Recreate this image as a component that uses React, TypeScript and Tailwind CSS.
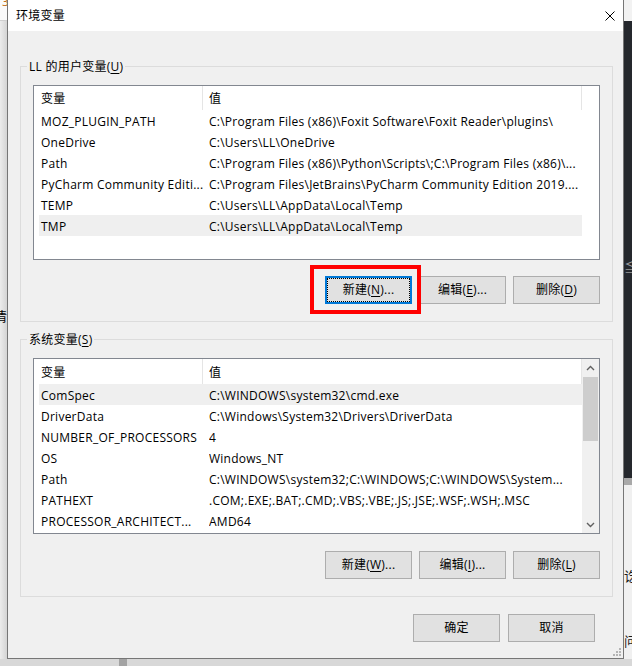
import React from "react";

type Row = { name: string; value: string; selected?: boolean };

const userVars: Row[] = [
  { name: "MOZ_PLUGIN_PATH", value: "C:\\Program Files (x86)\\Foxit Software\\Foxit Reader\\plugins\\" },
  { name: "OneDrive", value: "C:\\Users\\LL\\OneDrive" },
  { name: "Path", value: "C:\\Program Files (x86)\\Python\\Scripts\\;C:\\Program Files (x86)\\..." },
  { name: "PyCharm Community Editi...", value: "C:\\Program Files\\JetBrains\\PyCharm Community Edition 2019...." },
  { name: "TEMP", value: "C:\\Users\\LL\\AppData\\Local\\Temp" },
  { name: "TMP", value: "C:\\Users\\LL\\AppData\\Local\\Temp", selected: true },
];

const systemVars: Row[] = [
  { name: "ComSpec", value: "C:\\WINDOWS\\system32\\cmd.exe", selected: true },
  { name: "DriverData", value: "C:\\Windows\\System32\\Drivers\\DriverData" },
  { name: "NUMBER_OF_PROCESSORS", value: "4" },
  { name: "OS", value: "Windows_NT" },
  { name: "Path", value: "C:\\WINDOWS\\system32;C:\\WINDOWS;C:\\WINDOWS\\System..." },
  { name: "PATHEXT", value: ".COM;.EXE;.BAT;.CMD;.VBS;.VBE;.JS;.JSE;.WSF;.WSH;.MSC" },
  { name: "PROCESSOR_ARCHITECT...", value: "AMD64" },
];

function Key({ k }: { k: string }) {
  return <span className="underline underline-offset-[2px]">{k}</span>;
}

function Chevron({ up }: { up?: boolean }) {
  return (
    <svg width="9" height="6" viewBox="0 0 9 6">
      <polyline
        points={up ? "1,5 4.5,1.5 8,5" : "1,1 4.5,4.5 8,1"}
        fill="none"
        stroke="#606060"
        strokeWidth="1.4"
      />
    </svg>
  );
}

function Scrollbar() {
  return (
    <div className="w-[17px] bg-[#f0f0f0] flex flex-col">
      <div className="h-[17px] flex items-center justify-center">
        <Chevron up />
      </div>
      <div className="flex-1 px-[1px] pt-[1px]">
        <div className="h-[64px] bg-[#cdcdcd]" />
      </div>
      <div className="h-[17px] flex items-center justify-center">
        <Chevron />
      </div>
    </div>
  );
}

function VarList({
  rows,
  scroll,
  height,
  header,
}: {
  rows: Row[];
  scroll?: boolean;
  height: string;
  header: string;
}) {
  return (
    <div className={`${height} border border-[#828790] bg-white flex`}>
      <div className="flex-1 flex flex-col min-w-0">
        <div className={`${header} flex shrink-0`}>
          <div className="w-[169px] border-r border-[#e5e5e5] pl-[7px] pt-[2px] flex items-center">变量</div>
          <div className="flex-1 border-r border-[#e5e5e5] pl-[6px] pt-[2px] flex items-center">值</div>
        </div>
        {rows.map((r) => (
          <div
            key={r.name}
            className={`h-[21px] ml-[5px] pt-[2px] flex items-center whitespace-nowrap ${r.selected ? "bg-[#efefef]" : ""}`}
          >
            <div className="w-[170px] pl-[2px] overflow-hidden">{r.name}</div>
            <div className="flex-1 overflow-hidden">{r.value}</div>
          </div>
        ))}
      </div>
      {scroll ? <Scrollbar /> : <div className="w-[17px]" />}
    </div>
  );
}

function Btn({ children }: { children: React.ReactNode }) {
  return (
    <div className="w-[87px] h-[28px] flex items-center justify-center bg-[#e1e1e1] border border-[#adadad]">
      {children}
    </div>
  );
}

function FocusBtn({ children }: { children: React.ReactNode }) {
  return (
    <div className="relative">
      <div className="w-[87px] h-[28px] flex bg-[#e1e1e1] border-2 border-[#0078d7]">
        <div className="flex-1 flex items-center justify-center border border-dotted border-black">
          {children}
        </div>
      </div>
      {/* red callout frame around the New button */}
      <div className="absolute -left-[15px] -top-[11px] -right-[9px] -bottom-[10px] border-[4px] border-[#ff0000] z-10 pointer-events-none" />
    </div>
  );
}

function Group({ label, children }: { label: React.ReactNode; children: React.ReactNode }) {
  return (
    <div className="relative ml-[12px] mr-[10px] border border-[#dcdcdc] px-[12px] pt-[18px] pb-[17px]">
      <div className="absolute left-[6px] -top-[9px] px-[2px] h-[17px] leading-[17px] bg-[#f0f0f0]">{label}</div>
      {children}
    </div>
  );
}

function ResizeGrip() {
  const dots = [
    [6, 0],
    [3, 3],
    [6, 3],
    [0, 6],
    [3, 6],
    [6, 6],
  ];
  return (
    <svg className="absolute right-[2px] bottom-[2px]" width="8" height="8" viewBox="0 0 8 8">
      {dots.map(([x, y]) => (
        <rect key={`${x}-${y}`} x={x} y={y} width="2" height="2" fill="#b4b4b4" />
      ))}
    </svg>
  );
}

export default function App() {
  return (
    <div className="w-[632px] h-[666px] flex flex-col overflow-hidden bg-[#f0f0f0] text-[12px] tracking-[0.25px] text-black font-['Open_Sans','Noto_Sans_CJK_SC',sans-serif]">
      <div className="flex h-[659px]">
        {/* desktop behind, left edge */}
        <div className="w-[7px] flex flex-col">
          <div className="h-[20px] bg-[#fafafa] relative overflow-hidden">
            <span className="absolute left-[2px] -top-[7px] text-[#c07020] text-[12px]">3</span>
          </div>
          <div className="h-[1px] bg-[#cfcfcf]" />
          <div className="flex-1 relative overflow-hidden bg-linear-to-r from-[#ececec] to-[#d4d4d4]">
            <span className="absolute -left-[6px] top-[286px] text-[13px]">清</span>
          </div>
        </div>

        {/* dialog window */}
        <div className="w-[617px] relative flex flex-col border-l border-r border-b border-[#767676] bg-[#f0f0f0]">
          <div className="h-[31px] bg-white flex items-center justify-between pl-[8px] pr-[8px]">
            <span>环境变量</span>
            <svg width="10" height="10" viewBox="0 0 10 10">
              <path d="M0.5 0.5 L9.5 9.5 M9.5 0.5 L0.5 9.5" stroke="#000" strokeWidth="1" />
            </svg>
          </div>

          <div className="flex flex-col pt-[35px]">
            <Group
              label={
                <>
                  LL 的用户变量(<Key k="U" />)
                </>
              }
            >
              <VarList rows={userVars} height="h-[175px]" header="h-[24px]" />
              <div className="mt-[16px] flex justify-end gap-[7px]">
                <FocusBtn>
                  新建(<Key k="N" />)...
                </FocusBtn>
                <Btn>
                  编辑(<Key k="E" />)...
                </Btn>
                <Btn>
                  删除(<Key k="D" />)
                </Btn>
              </div>
            </Group>

            <div className="mt-[17px]">
              <Group
                label={
                  <>
                    系统变量(<Key k="S" />)
                  </>
                }
              >
                <VarList rows={systemVars} scroll height="h-[176px]" header="h-[25px]" />
                <div className="mt-[17px] flex justify-end gap-[7px]">
                  <Btn>
                    新建(<Key k="W" />)...
                  </Btn>
                  <Btn>
                    编辑(<Key k="I" />)...
                  </Btn>
                  <Btn>
                    删除(<Key k="L" />)
                  </Btn>
                </div>
              </Group>
            </div>

            <div className="mt-[17px] pr-[28px] flex justify-end gap-[8px]">
              <Btn>确定</Btn>
              <Btn>取消</Btn>
            </div>
          </div>
          <ResizeGrip />
        </div>

        {/* desktop behind, right edge */}
        <div className="w-[8px] flex flex-col">
          <div className="h-[21px] bg-[#f2f2f2]" />
          <div className="h-[457px] bg-[#25282d] relative overflow-hidden">
            <span className="absolute left-[0px] top-[236px] text-[#9a9a9a] text-[13px]">≦</span>
          </div>
          <div className="h-[7px] bg-[#a9a9a9]" />
          <div className="flex-1 relative overflow-hidden bg-[#f0f0f0]">
            <span className="absolute left-[0px] top-[82px] text-[13px] text-[#1a1a1a]">讫</span>
            <span className="absolute left-[0px] top-[147px] text-[13px] text-[#1a1a1a]">问</span>
          </div>
        </div>
      </div>

      {/* desktop behind, bottom edge */}
      <div className="h-[7px] bg-[#d8d8d8] flex">
        <div className="ml-[119px] w-[8px] bg-[#a3a3a3]" />
      </div>
    </div>
  );
}
